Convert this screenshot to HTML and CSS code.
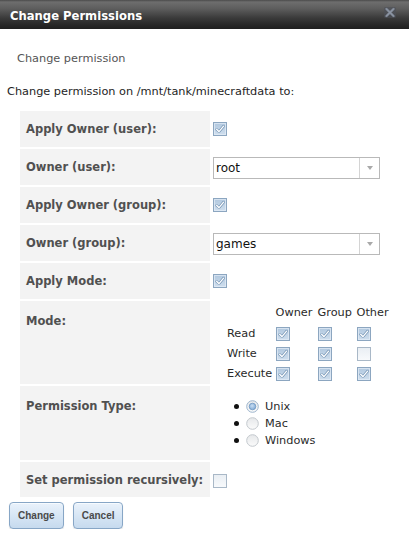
FILE: index.html
```html
<!DOCTYPE html>
<html>
<head>
<meta charset="utf-8">
<title>Change Permissions</title>
<link rel="stylesheet" href="styles.css">
</head>
<body>
<svg class="defs" width="0" height="0" aria-hidden="true">
  <defs>
    <linearGradient id="cbOn" x1="0" y1="0" x2="0" y2="1">
      <stop offset="0" stop-color="#b0c7de"/>
      <stop offset="1" stop-color="#d0dfee"/>
    </linearGradient>
    <linearGradient id="cbOff" x1="0" y1="0" x2="0" y2="1">
      <stop offset="0" stop-color="#e9eef3"/>
      <stop offset="1" stop-color="#f8fafc"/>
    </linearGradient>
    <linearGradient id="rdOff" x1="0" y1="0" x2="0" y2="1">
      <stop offset="0" stop-color="#e6e8ea"/>
      <stop offset="1" stop-color="#fbfbfb"/>
    </linearGradient>
    <radialGradient id="rdDot" cx="0.45" cy="0.4" r="0.6">
      <stop offset="0" stop-color="#c9def3"/>
      <stop offset="1" stop-color="#7fa9d4"/>
    </radialGradient>
    <symbol id="cbChecked" viewBox="0 0 14 14">
      <rect x="0.5" y="0.5" width="13" height="13" fill="url(#cbOn)" stroke="#8ca6c0"/>
      <rect x="1.5" y="1.5" width="11" height="11" fill="none" stroke="#e4edf6" stroke-opacity="0.7"/>
      <path d="M3.6 7.3 L6 9.7 L10.6 4.2" fill="none" stroke="#7393b4" stroke-width="2.6" stroke-linecap="round" stroke-linejoin="round"/>
      <path d="M3.6 7.3 L6 9.7 L10.6 4.2" fill="none" stroke="#ffffff" stroke-width="1.3" stroke-linecap="round" stroke-linejoin="round"/>
    </symbol>
    <symbol id="cbEmpty" viewBox="0 0 14 14">
      <rect x="0.5" y="0.5" width="13" height="13" fill="url(#cbOff)" stroke="#a9b8c7"/>
    </symbol>
    <symbol id="rdOn" viewBox="0 0 13 13">
      <circle cx="6.5" cy="6.5" r="5.8" fill="url(#rdOff)" stroke="#9db5cd"/>
      <circle cx="6.5" cy="6.5" r="3.3" fill="url(#rdDot)" stroke="#6e97c1" stroke-width="0.8"/>
    </symbol>
    <symbol id="rdEmpty" viewBox="0 0 13 13">
      <circle cx="6.5" cy="6.5" r="5.8" fill="url(#rdOff)" stroke="#c3c8cd"/>
    </symbol>
  </defs>
</svg>

<div class="dialog">
  <div class="titlebar">
    <span class="title">Change Permissions</span>
    <svg class="close" viewBox="0 0 12 11" width="12" height="11">
      <rect x="0" y="0" width="12" height="11" rx="1.5" fill="#4c5058" fill-opacity="0.6"/>
      <path d="M2.5 2 L9.5 9 M9.5 2 L2.5 9" stroke="#7f8896" stroke-width="2.4" stroke-linecap="round"/>
      <path d="M2.5 2 L9.5 9 M9.5 2 L2.5 9" stroke="#9aa3b0" stroke-width="1" stroke-linecap="round" stroke-opacity="0.7"/>
    </svg>
  </div>

  <div class="subtitle">Change permission</div>
  <div class="intro">Change permission on /mnt/tank/minecraftdata to:</div>

  <div class="form">
    <div class="label">Apply Owner (user):</div>
    <div class="field"><svg class="cb"><use href="#cbChecked"/></svg></div>

    <div class="label">Owner (user):</div>
    <div class="field">
      <div class="select"><span class="select-text">root</span><span class="select-btn"><span class="arrow"></span></span></div>
    </div>

    <div class="label">Apply Owner (group):</div>
    <div class="field"><svg class="cb"><use href="#cbChecked"/></svg></div>

    <div class="label">Owner (group):</div>
    <div class="field">
      <div class="select"><span class="select-text">games</span><span class="select-btn"><span class="arrow"></span></span></div>
    </div>

    <div class="label">Apply Mode:</div>
    <div class="field"><svg class="cb"><use href="#cbChecked"/></svg></div>

    <div class="label label-top">Mode:</div>
    <div class="field field-top">
      <div class="mode">
        <span class="mh"></span><span class="mh">Owner</span><span class="mh">Group</span><span class="mh">Other</span>
        <span class="mr">Read</span>
        <span class="mc"><svg class="cb"><use href="#cbChecked"/></svg></span>
        <span class="mc"><svg class="cb"><use href="#cbChecked"/></svg></span>
        <span class="mc"><svg class="cb"><use href="#cbChecked"/></svg></span>
        <span class="mr">Write</span>
        <span class="mc"><svg class="cb"><use href="#cbChecked"/></svg></span>
        <span class="mc"><svg class="cb"><use href="#cbChecked"/></svg></span>
        <span class="mc"><svg class="cb"><use href="#cbEmpty"/></svg></span>
        <span class="mr">Execute</span>
        <span class="mc"><svg class="cb"><use href="#cbChecked"/></svg></span>
        <span class="mc"><svg class="cb"><use href="#cbChecked"/></svg></span>
        <span class="mc"><svg class="cb"><use href="#cbChecked"/></svg></span>
      </div>
    </div>

    <div class="label label-top">Permission Type:</div>
    <div class="field field-top">
      <ul class="radios">
        <li><span class="dot"></span><svg class="rd"><use href="#rdOn"/></svg><span>Unix</span></li>
        <li><span class="dot"></span><svg class="rd"><use href="#rdEmpty"/></svg><span>Mac</span></li>
        <li><span class="dot"></span><svg class="rd"><use href="#rdEmpty"/></svg><span>Windows</span></li>
      </ul>
    </div>

    <div class="label">Set permission recursively:</div>
    <div class="field"><svg class="cb cb-last"><use href="#cbEmpty"/></svg></div>
  </div>

  <div class="buttons">
    <button class="btn">Change</button>
    <button class="btn">Cancel</button>
  </div>
</div>
</body>
</html>
```

FILE: styles.css
```css
html, body {
  margin: 0;
  padding: 0;
  background: #ffffff;
}

body {
  font-family: "DejaVu Sans", Verdana, sans-serif;
  font-size: 11.3px;
  color: #222222;
}

.defs {
  position: absolute;
  width: 0;
  height: 0;
  overflow: hidden;
}

.dialog {
  width: 409px;
}

.titlebar {
  height: 29px;
  box-sizing: border-box;
  padding: 9px 0 0 10px;
  position: relative;
  background: linear-gradient(to bottom, #4b4b4b 0px, #6e6e6e 2px, #5c5c5c 9px, #3a3a3a 18px, #272727 25px, #1f1f1f 29px);
}

.title {
  font-weight: bold;
  font-size: 11.6px;
  line-height: 14px;
  color: #ffffff;
  display: block;
}

.close {
  position: absolute;
  left: 384px;
  top: 7px;
}

.subtitle {
  padding: 22px 0 0 17px;
  line-height: 15px;
  color: #555555;
}

.intro {
  margin-top: 18px;
  padding-left: 7px;
  line-height: 15px;
  color: #1e1e1e;
}

.form {
  display: grid;
  grid-template-columns: 190px 1fr;
  grid-template-rows: 36px 36px 36px 36px 36px 83px 74px 35px;
  gap: 2px;
  margin: 12px 0 0 20px;
}

.label {
  background: #f3f3f3;
  font-weight: bold;
  font-size: 11.5px;
  line-height: 14px;
  color: #505050;
  padding: 0 6px;
  display: flex;
  align-items: center;
}

.label-top {
  align-items: flex-start;
  padding-top: 13px;
}

.field {
  display: flex;
  align-items: center;
  padding-left: 1px;
}

.field-top {
  align-items: flex-start;
}

.cb {
  width: 14px;
  height: 14px;
  display: block;
}

.cb-last {
  margin-top: 3px;
}

.select {
  width: 167px;
  height: 22px;
  box-sizing: border-box;
  border: 1px solid #b9b9b9;
  background: #ffffff;
  display: flex;
  align-items: center;
  margin-top: 2px;
}

.select-text {
  flex: 1;
  padding-left: 2px;
  font-size: 12px;
  color: #111111;
  line-height: 20px;
}

.select-btn {
  width: 19px;
  height: 20px;
  border-left: 1px solid #d4d4d4;
  display: flex;
  align-items: center;
  justify-content: center;
}

.arrow {
  width: 0;
  height: 0;
  border-left: 3.5px solid transparent;
  border-right: 3.5px solid transparent;
  border-top: 4px solid #a9a9a9;
}

.mode {
  display: grid;
  grid-template-columns: 48.5px 42px 39px auto;
  grid-template-rows: 18px 20px 20px 20px;
  margin: 5px 0 0 14px;
  color: #2a2a2a;
}

.mode > span {
  display: flex;
  align-items: center;
  line-height: 14px;
}

.mode > .mh {
  align-items: flex-start;
}

.radios {
  list-style: none;
  margin: 0;
  padding: 12px 0 0 21px;
  color: #2a2a2a;
}

.radios li {
  display: flex;
  align-items: center;
  height: 17px;
}

.dot {
  width: 5px;
  height: 5px;
  border-radius: 50%;
  background: #111111;
  margin-right: 7px;
}

.rd {
  width: 13px;
  height: 13px;
  display: block;
  margin-right: 6px;
}

.buttons {
  display: flex;
  gap: 9px;
  margin: 5px 0 0 9px;
}

.btn {
  height: 27px;
  padding: 0 8px;
  border: 1px solid #87a6c6;
  border-radius: 4px;
  background: linear-gradient(to bottom, #eaf2fb 0%, #d7e6f5 50%, #c6daee 100%);
  box-shadow: inset 0 1px 0 #f7fbff, 0 1px 1px rgba(0,0,0,0.12);
  font-family: "Liberation Sans", Arial, sans-serif;
  font-weight: bold;
  font-size: 10px;
  color: #4a4a4a;
  line-height: 25px;
  cursor: pointer;
}
```
